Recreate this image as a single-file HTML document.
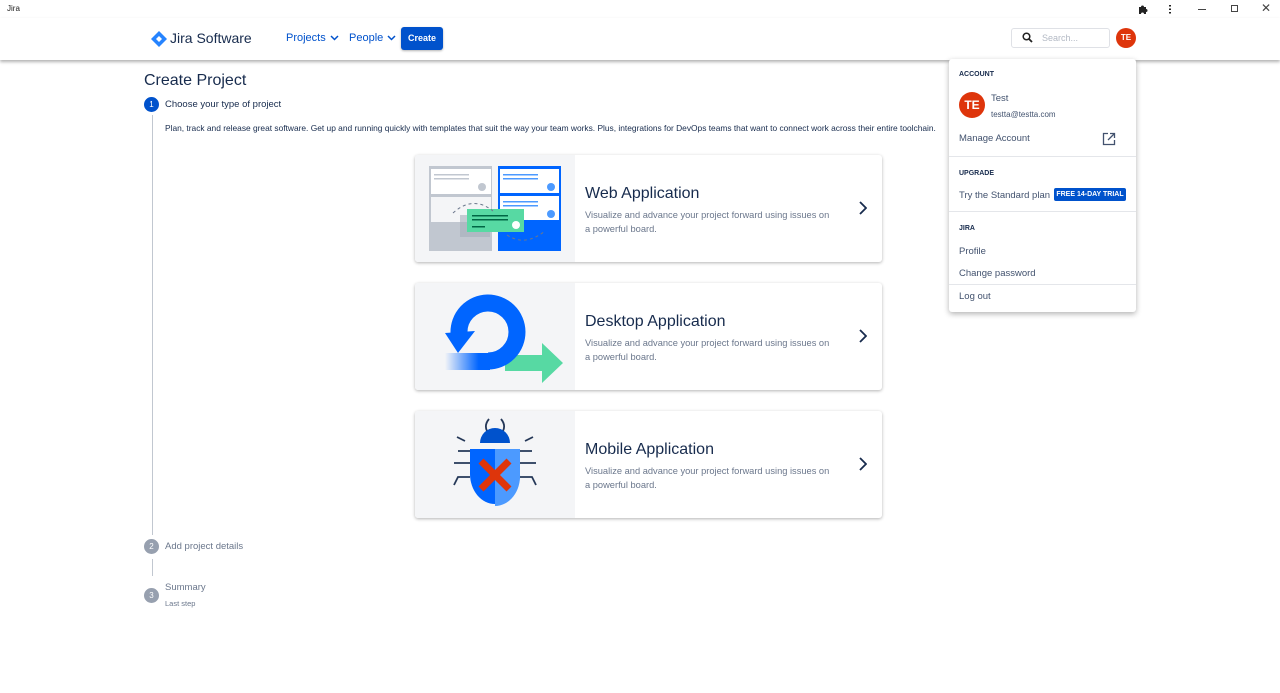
<!DOCTYPE html>
<html><head><meta charset="utf-8"><style>
*{box-sizing:border-box;margin:0;padding:0}
body{width:1280px;height:693px;overflow:hidden;background:#fff;font-family:"Liberation Sans",Arial,sans-serif;color:#172b4d;position:relative}
.abs{position:absolute}
.hdr{position:absolute;left:0;width:1280px;background:#fff;box-shadow:0 2px 3px rgba(0,0,0,.3)}
.nav{color:#0052cc;font-size:11px}
.card{position:absolute;left:415px;width:467px;height:107px;background:#fff;box-shadow:0 1px 3px rgba(0,0,0,.3);border-radius:3px;overflow:hidden}
.card .img{position:absolute;left:0;top:0;width:160px;height:107px;background:#f4f5f7}
.card h3{position:absolute;left:170px;top:30px;font-size:16px;font-weight:normal;color:#172b4d}
.card p{position:absolute;left:170px;top:54px;font-size:9.3px;line-height:13.5px;color:#6b778c;width:245px}
.card .chev{position:absolute;left:443px;top:46px}
.menu{position:absolute;left:949px;top:59px;width:187px;height:253px;background:#fff;box-shadow:0 2px 6px rgba(0,0,0,.3);border-radius:3px;font-size:9px;color:#42526e}
.sec{position:absolute;left:10px;font-size:7px;font-weight:bold;color:#172b4d}
.it{position:absolute;left:10px;font-size:9.5px;color:#42526e}
.hr{position:absolute;left:0;width:187px;height:1px;background:#e4e6ea}
.step{position:absolute;width:15px;height:15px;border-radius:50%;color:#fff;font-size:8px;text-align:center;line-height:15px}
</style></head><body>
<div class="abs" style="left:7px;top:4px;font-size:8px;color:#222">Jira</div>
<div class="hdr" style="top:18px;height:42px"></div>
<svg class="abs" style="left:1137px;top:3px" width="12" height="12" viewBox="0 0 12 12"><path d="M2 4h2a1.5 1.5 0 1 1 3 0h2v2a1.5 1.5 0 1 1 0 3v2H7a1.5 1.5 0 1 0-3 0H2z" fill="#222"/></svg>
<div class="abs" style="left:1169px;top:4px;width:2px;height:10px;background:radial-gradient(circle,#222 45%,transparent 50%) 0 0/2px 3.5px"></div>
<div class="abs" style="left:1198px;top:9px;width:8px;height:1px;background:#444"></div>
<div class="abs" style="left:1231px;top:5px;width:7px;height:7px;border:1px solid #444"></div>
<div class="abs" style="left:1261px;top:1px;font-size:12px;color:#444">✕</div>
<svg class="abs" style="left:151px;top:31px" width="16" height="16" viewBox="0 0 16 16"><path d="M8 0L16 8 8 16 0 8z" fill="#2684ff"/><path d="M8 5L11 8 8 11 5 8z" fill="#fff"/></svg>
<div class="abs" style="left:170px;top:30px;font-size:14px;color:#172b4d">Jira Software</div>
<div class="abs nav" style="left:286px;top:32px">Projects</div>
<svg class="abs" style="left:330px;top:35px" width="9" height="6"><path d="M1 1l3.5 3.5L8 1" stroke="#0052cc" stroke-width="1.5" fill="none"/></svg>
<div class="abs nav" style="left:349px;top:32px">People</div>
<svg class="abs" style="left:387px;top:35px" width="9" height="6"><path d="M1 1l3.5 3.5L8 1" stroke="#0052cc" stroke-width="1.5" fill="none"/></svg>
<div class="abs" style="left:401px;top:27px;width:42px;height:23px;background:#0052cc;border-radius:3px;color:#fff;font-size:9px;font-weight:bold;text-align:center;line-height:23px;box-shadow:0 1px 2px rgba(0,0,0,.3)">Create</div>
<div class="abs" style="left:1011px;top:28px;width:99px;height:20px;border:1px solid #dfe1e6;border-radius:3px"></div>
<svg class="abs" style="left:1022px;top:32px" width="11" height="11"><circle cx="4.5" cy="4.5" r="3.3" stroke="#222" stroke-width="1.5" fill="none"/><path d="M7 7l3 3" stroke="#222" stroke-width="1.8"/></svg>
<div class="abs" style="left:1042px;top:33px;font-size:9px;color:#b3b9c4">Search...</div>
<div class="abs" style="left:1116px;top:28px;width:20px;height:20px;border-radius:50%;background:#de350b;color:#fff;font-size:8px;font-weight:bold;text-align:center;line-height:20px">TE</div>

<div class="abs" style="left:144px;top:72px;font-size:16px;color:#172b4d">Create Project</div>
<div class="step" style="left:144px;top:97px;background:#0052cc">1</div>
<div class="abs" style="left:165px;top:99px;font-size:9.5px;color:#172b4d">Choose your type of project</div>
<div class="abs" style="left:152px;top:115px;width:1px;height:420px;background:#c1c7d0"></div>
<div class="abs" style="left:165px;top:123px;font-size:8.4px;color:#172b4d;white-space:nowrap;width:783px;overflow:hidden">Plan, track and release great software. Get up and running quickly with templates that suit the way your team works. Plus, integrations for DevOps teams that want to connect work across their entire toolchain.</div>

<div class="card" style="top:155px"><div class="img"><svg width="160" height="107" viewBox="0 0 160 107">
<rect x="14" y="11" width="63" height="85" fill="#c1c7d0"/><rect x="16" y="14" width="60" height="25" fill="#fff"/><rect x="16" y="42" width="60" height="25" fill="#f4f5f7"/><circle cx="67" cy="32" r="4" fill="#c1c7d0"/><rect x="19" y="19" width="35" height="1.5" fill="#c1c7d0"/><rect x="19" y="23" width="35" height="1.5" fill="#c1c7d0"/>
<rect x="83" y="11" width="63" height="85" fill="#0065ff"/><rect x="85" y="14" width="59" height="24" fill="#fff"/><rect x="85" y="41" width="59" height="24" fill="#fff"/><circle cx="136" cy="32" r="4" fill="#4c9aff"/><circle cx="136" cy="59" r="4" fill="#4c9aff"/><rect x="88" y="19" width="35" height="1.5" fill="#4c9aff"/><rect x="88" y="23" width="35" height="1.5" fill="#4c9aff"/><rect x="88" y="46" width="35" height="1.5" fill="#4c9aff"/><rect x="88" y="50" width="35" height="1.5" fill="#4c9aff"/>
<rect x="45" y="60" width="30" height="22" fill="#a5adba" opacity=".6"/><rect x="52" y="54" width="57" height="23" fill="#57d9a3"/><rect x="57" y="60" width="36" height="1.5" fill="#006644"/><rect x="57" y="64" width="36" height="1.5" fill="#006644"/><rect x="57" y="71" width="13" height="1.5" fill="#006644"/><circle cx="101" cy="70" r="4" fill="#fff"/>
<path d="M38 58q20-18 40-2M92 80q18 12 38-4" stroke="#6b778c" stroke-dasharray="3 3" fill="none"/></svg></div>
<h3>Web Application</h3><p>Visualize and advance your project forward using issues on a powerful board.</p>
<svg class="chev" width="9" height="14"><path d="M2 1l6 6-6 6" stroke="#172b4d" stroke-width="1.8" fill="none"/></svg></div>

<div class="card" style="top:283px"><div class="img"><svg width="160" height="107" viewBox="0 0 160 107">
<defs><linearGradient id="g" x1="0" x2="1"><stop offset="0" stop-color="#0065ff" stop-opacity="0"/><stop offset=".75" stop-color="#0065ff"/></linearGradient></defs>
<path d="M90 72h37v-12l21 20-21 20v-12H90z" fill="#57d9a3"/>
<path d="M44 50A29 29 0 1 1 73 78" stroke="#0065ff" stroke-width="17" fill="none"/>
<rect x="30" y="70" width="45" height="17" fill="url(#g)"/>
<path d="M30 50l30 -2-17 22z" fill="#0065ff"/></svg></div>
<h3>Desktop Application</h3><p>Visualize and advance your project forward using issues on a powerful board.</p>
<svg class="chev" width="9" height="14"><path d="M2 1l6 6-6 6" stroke="#172b4d" stroke-width="1.8" fill="none"/></svg></div>

<div class="card" style="top:411px"><div class="img"><svg width="160" height="107" viewBox="0 0 160 107">
<path d="M72 20q-3-6 2-12M88 20q3-6-2-12M55 40h-12M55 52h-16M55 66h-12l-4 8M105 40h12M105 52h16M105 66h12l4 8M50 30l-8-4M110 30l8-4" stroke="#253858" stroke-width="1.8" fill="none"/>
<path d="M65 32a15 15 0 0 1 30 0z" fill="#0052cc"/>
<path d="M55 38h50v25a25 30 0 0 1-50 0z" fill="#0065ff"/><path d="M80 38h25v25a25 30 0 0 1-25 32z" fill="#4c9aff"/>
<path d="M66 50l28 28M94 50l-28 28" stroke="#de350b" stroke-width="7"/></svg></div>
<h3>Mobile Application</h3><p>Visualize and advance your project forward using issues on a powerful board.</p>
<svg class="chev" width="9" height="14"><path d="M2 1l6 6-6 6" stroke="#172b4d" stroke-width="1.8" fill="none"/></svg></div>

<div class="step" style="left:144px;top:539px;background:#97a0af">2</div>
<div class="abs" style="left:165px;top:541px;font-size:9.5px;color:#6b778c">Add project details</div>
<div class="abs" style="left:152px;top:559px;width:1px;height:17px;background:#c1c7d0"></div>
<div class="step" style="left:144px;top:588px;background:#97a0af">3</div>
<div class="abs" style="left:165px;top:582px;font-size:9.5px;color:#6b778c">Summary</div>
<div class="abs" style="left:165px;top:599px;font-size:7.5px;color:#6b778c">Last step</div>

<div class="menu">
<div class="sec" style="top:12px">ACCOUNT</div>
<div class="abs" style="left:10px;top:33px;width:26px;height:26px;border-radius:50%;background:#de350b;color:#fff;font-size:12px;font-weight:bold;text-align:center;line-height:26px">TE</div>
<div class="abs" style="left:42px;top:34px;font-size:9.5px;color:#42526e">Test</div>
<div class="abs" style="left:42px;top:51px;font-size:8px;color:#42526e">testta@testta.com</div>
<div class="it" style="top:74px">Manage Account</div>
<svg class="abs" style="left:153px;top:73px" width="14" height="14"><path d="M6 1.5H1.5v11h11V8M8 1.5h4.5V6M12.5 1.5L6 8" stroke="#42526e" stroke-width="1.3" fill="none"/></svg>
<div class="hr" style="top:97px"></div>
<div class="sec" style="top:111px">UPGRADE</div>
<div class="it" style="top:131px">Try the Standard plan</div>
<div class="abs" style="left:105px;top:129px;width:72px;height:13px;background:#0052cc;border-radius:2px;color:#fff;font-size:7px;font-weight:bold;text-align:center;line-height:13px">FREE 14-DAY TRIAL</div>
<div class="hr" style="top:152px"></div>
<div class="sec" style="top:166px">JIRA</div>
<div class="it" style="top:187px">Profile</div>
<div class="it" style="top:209px">Change password</div>
<div class="hr" style="top:225px"></div>
<div class="it" style="top:232px">Log out</div>
</div>
</body></html>
